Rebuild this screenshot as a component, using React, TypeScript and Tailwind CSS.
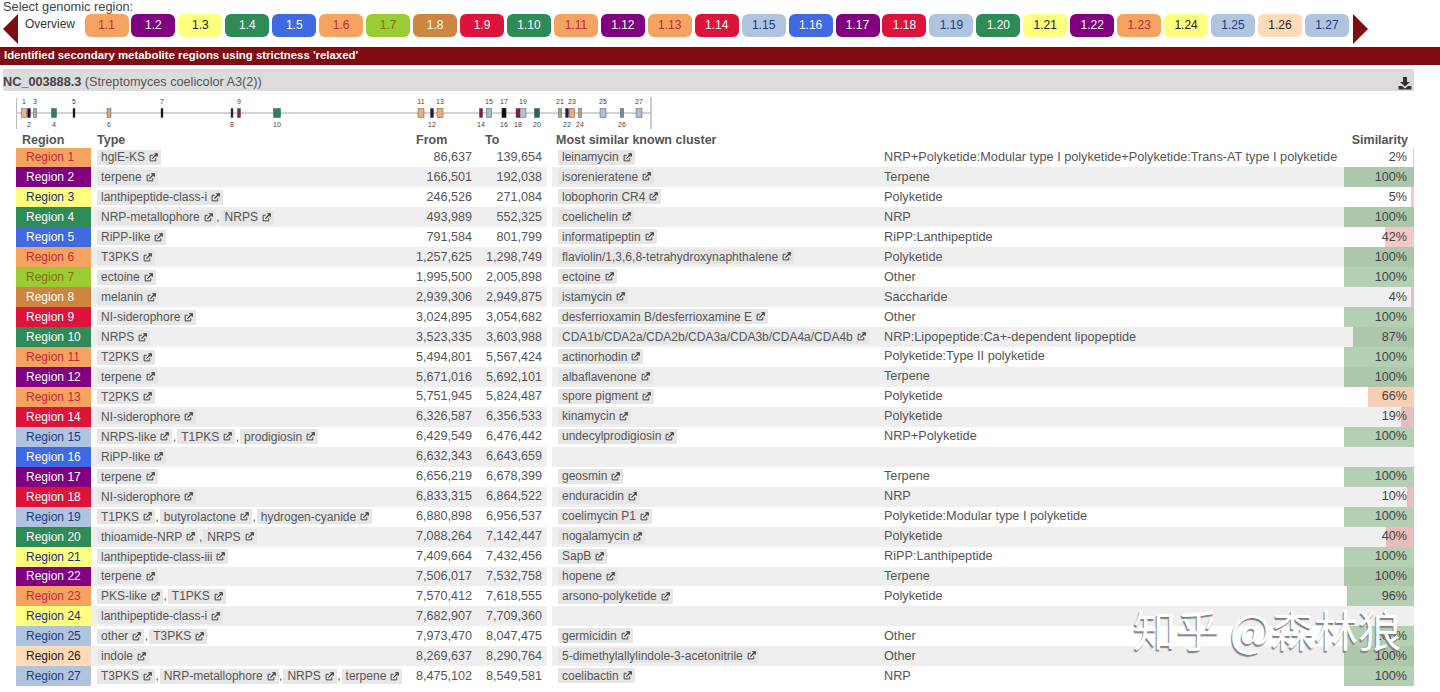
const palette: Record<string, string> = {
  orange: 'bg-[#f4a460] text-[#c8283c]',
  purple: 'bg-[#800080] text-white',
  yellow: 'bg-[#ffff7f] text-[#1c2f7a]',
  green: 'bg-[#2e8b57] text-white',
  blue: 'bg-[#4169e1] text-white',
  olive: 'bg-[#9acd32] text-[#8a6d10]',
  tan: 'bg-[#cd853f] text-white',
  crimson: 'bg-[#dc143c] text-white',
  steel: 'bg-[#b0c4de] text-[#1c3a8a]',
  peach: 'bg-[#ffdab9] text-[#2a1a10]',
};

const pillText: Record<string, string> = {
  yellow: 'text-[#222222]',
  peach: 'text-[#222222]',
};

type Row = {
  color: string;
  types: string[];
  from: string;
  to: string;
  cluster?: string;
  kind?: string;
  sim?: number;
};

const rows: Row[] = [
  { color: 'orange', types: ['hglE-KS'], from: '86,637', to: '139,654', cluster: 'leinamycin', kind: 'NRP+Polyketide:Modular type I polyketide+Polyketide:Trans-AT type I polyketide', sim: 2 },
  { color: 'purple', types: ['terpene'], from: '166,501', to: '192,038', cluster: 'isorenieratene', kind: 'Terpene', sim: 100 },
  { color: 'yellow', types: ['lanthipeptide-class-i'], from: '246,526', to: '271,084', cluster: 'lobophorin CR4', kind: 'Polyketide', sim: 5 },
  { color: 'green', types: ['NRP-metallophore', 'NRPS'], from: '493,989', to: '552,325', cluster: 'coelichelin', kind: 'NRP', sim: 100 },
  { color: 'blue', types: ['RiPP-like'], from: '791,584', to: '801,799', cluster: 'informatipeptin', kind: 'RiPP:Lanthipeptide', sim: 42 },
  { color: 'orange', types: ['T3PKS'], from: '1,257,625', to: '1,298,749', cluster: 'flaviolin/1,3,6,8-tetrahydroxynaphthalene', kind: 'Polyketide', sim: 100 },
  { color: 'olive', types: ['ectoine'], from: '1,995,500', to: '2,005,898', cluster: 'ectoine', kind: 'Other', sim: 100 },
  { color: 'tan', types: ['melanin'], from: '2,939,306', to: '2,949,875', cluster: 'istamycin', kind: 'Saccharide', sim: 4 },
  { color: 'crimson', types: ['NI-siderophore'], from: '3,024,895', to: '3,054,682', cluster: 'desferrioxamin B/desferrioxamine E', kind: 'Other', sim: 100 },
  { color: 'green', types: ['NRPS'], from: '3,523,335', to: '3,603,988', cluster: 'CDA1b/CDA2a/CDA2b/CDA3a/CDA3b/CDA4a/CDA4b', kind: 'NRP:Lipopeptide:Ca+-dependent lipopeptide', sim: 87 },
  { color: 'orange', types: ['T2PKS'], from: '5,494,801', to: '5,567,424', cluster: 'actinorhodin', kind: 'Polyketide:Type II polyketide', sim: 100 },
  { color: 'purple', types: ['terpene'], from: '5,671,016', to: '5,692,101', cluster: 'albaflavenone', kind: 'Terpene', sim: 100 },
  { color: 'orange', types: ['T2PKS'], from: '5,751,945', to: '5,824,487', cluster: 'spore pigment', kind: 'Polyketide', sim: 66 },
  { color: 'crimson', types: ['NI-siderophore'], from: '6,326,587', to: '6,356,533', cluster: 'kinamycin', kind: 'Polyketide', sim: 19 },
  { color: 'steel', types: ['NRPS-like', 'T1PKS', 'prodigiosin'], from: '6,429,549', to: '6,476,442', cluster: 'undecylprodigiosin', kind: 'NRP+Polyketide', sim: 100 },
  { color: 'blue', types: ['RiPP-like'], from: '6,632,343', to: '6,643,659' },
  { color: 'purple', types: ['terpene'], from: '6,656,219', to: '6,678,399', cluster: 'geosmin', kind: 'Terpene', sim: 100 },
  { color: 'crimson', types: ['NI-siderophore'], from: '6,833,315', to: '6,864,522', cluster: 'enduracidin', kind: 'NRP', sim: 10 },
  { color: 'steel', types: ['T1PKS', 'butyrolactone', 'hydrogen-cyanide'], from: '6,880,898', to: '6,956,537', cluster: 'coelimycin P1', kind: 'Polyketide:Modular type I polyketide', sim: 100 },
  { color: 'green', types: ['thioamide-NRP', 'NRPS'], from: '7,088,264', to: '7,142,447', cluster: 'nogalamycin', kind: 'Polyketide', sim: 40 },
  { color: 'yellow', types: ['lanthipeptide-class-iii'], from: '7,409,664', to: '7,432,456', cluster: 'SapB', kind: 'RiPP:Lanthipeptide', sim: 100 },
  { color: 'purple', types: ['terpene'], from: '7,506,017', to: '7,532,758', cluster: 'hopene', kind: 'Terpene', sim: 100 },
  { color: 'orange', types: ['PKS-like', 'T1PKS'], from: '7,570,412', to: '7,618,555', cluster: 'arsono-polyketide', kind: 'Polyketide', sim: 96 },
  { color: 'yellow', types: ['lanthipeptide-class-i'], from: '7,682,907', to: '7,709,360' },
  { color: 'steel', types: ['other', 'T3PKS'], from: '7,973,470', to: '8,047,475', cluster: 'germicidin', kind: 'Other', sim: 100 },
  { color: 'peach', types: ['indole'], from: '8,269,637', to: '8,290,764', cluster: '5-dimethylallylindole-3-acetonitrile', kind: 'Other', sim: 100 },
  { color: 'steel', types: ['T3PKS', 'NRP-metallophore', 'NRPS', 'terpene'], from: '8,475,102', to: '8,549,581', cluster: 'coelibactin', kind: 'NRP', sim: 100 },
];

// label, centre x, width, fill of each region on the overview line
const marks: [string, number, number, string][] = [
  ['1', 8, 5, '#eeb488'], ['2', 13, 3, '#2a0a3a'], ['3', 19, 3, '#a8b088'], ['4', 38, 5, '#2e7f5f'],
  ['5', 58, 2, '#111111'], ['6', 93, 4, '#dda67c'], ['7', 146, 2, '#111111'], ['8', 216, 2, '#222233'],
  ['9', 223, 3, '#8a2440'], ['10', 261, 7, '#2e7f5f'], ['11', 405, 6, '#eeaa70'], ['12', 416, 3, '#1a1a44'],
  ['13', 424, 6, '#eeaa70'], ['14', 465, 3, '#8a1a44'], ['15', 473, 5, '#a8bccc'], ['16', 488, 4, '#111111'],
  ['17', 488, 4, '#111111'], ['18', 502, 4, '#8a1a44'], ['19', 507, 6, '#b0c4d8'], ['20', 521, 5, '#1f6f4f'],
  ['21', 544, 3, '#a0a880'], ['22', 551, 3, '#2a1a4a'], ['23', 556, 5, '#eeaa70'], ['24', 564, 3, '#a8b080'],
  ['25', 587, 6, '#b0c0d4'], ['26', 606, 3, '#808890'], ['27', 623, 6, '#b0bcd4'],
];

const simColor = (sim: number) => {
  if (sim >= 80) return 'bg-[#6b9f6b]/50';
  if (sim >= 60) return 'bg-[#e8884a]/40';
  return 'bg-[#e06060]/35';
};

const ExternalIcon = () => (
  <svg viewBox="0 0 12 12" className="ml-[4px] inline-block h-[9px] w-[9px] shrink-0 text-[#333333]" fill="none" stroke="currentColor">
    <path d="M9 7v3.5H1.5V3H5" strokeWidth="1.2" />
    <path d="M4.5 7.5L10 2M7 1h4v4" strokeWidth="1.5" />
  </svg>
);

const Tag = ({ label }: { label: string }) => (
  <span className="inline-flex h-[15px] items-center bg-[#e6e6e6] pr-[3px] pl-[4px] text-[12px] whitespace-nowrap">
    {label}
    <ExternalIcon />
  </span>
);

const Overview = () => (
  <svg viewBox="0 0 640 33" className="ml-[16px] mt-[6px] block h-[33px] w-[640px]">
    <line x1="0.5" y1="1" x2="0.5" y2="32" stroke="#bbbbbb" />
    <line x1="635" y1="0" x2="635" y2="32" stroke="#bbbbbb" strokeWidth="1.5" />
    <line x1="0" y1="16" x2="636" y2="16" stroke="#c4c4c4" strokeWidth="1.3" />
    {marks.map(([t, x, w, fill], i) => (
      <g key={t}>
        <rect x={x - w / 2} y={11.5} width={w} height={9} fill={fill} stroke="#333333" strokeOpacity="0.55" strokeWidth="0.7" />
        <text
          x={x}
          y={i % 2 === 0 ? 6.5 : 30}
          fontSize="7"
          textAnchor="middle"
          fill="#444444"
          fontFamily="Liberation Sans"
        >
          {t}
        </text>
      </g>
    ))}
  </svg>
);

export default function App() {
  return (
    <div className="relative h-[692px] w-[1440px] overflow-hidden bg-white font-['Liberation_Sans',Arial,sans-serif] text-[12.6px] text-[#555555]">
      <div className="pl-[3px] text-[12.8px] leading-[13px] text-[#444444]">Select genomic region:</div>

      <div className="mt-px flex h-[30px] items-start pl-[3px]">
        <svg viewBox="0 0 15 30" className="h-[30px] w-[15px] shrink-0">
          <path d="M15 0V30L0 15Z" fill="#7f0c10" />
        </svg>
        <div className="w-[66.5px] shrink-0 pl-[7px] pt-[3px] text-[12px] leading-[15px] text-[#333333]">Overview</div>
        <div className="flex gap-[2.95px]">
          {rows.map((r, i) => (
            <div
              key={i}
              className={`flex h-[22.5px] w-[44px] items-center justify-center rounded-[6px] text-[12px] ${palette[r.color]} ${pillText[r.color] ?? ''}`}
            >
              1.{i + 1}
            </div>
          ))}
        </div>
        <svg viewBox="0 0 15 30" className="ml-[4px] h-[30px] w-[15px] shrink-0">
          <path d="M0 0V30L15 15Z" fill="#7f0c10" />
        </svg>
      </div>

      <div className="mt-[3px] flex h-[18px] items-center bg-[#7f0c10] pl-[4px] text-[11.4px] font-bold text-white">
        Identified secondary metabolite regions using strictness 'relaxed'
      </div>

      <div className="ml-[3px] mt-[4px] flex h-[22px] w-[1411px] items-end justify-between bg-[#dcdcdc] pr-[2px] pb-px text-[12.7px] leading-[15px]">
        <div>
          <span className="font-bold text-[#444444]">NC_003888.3</span> (Streptomyces coelicolor A3(2))
        </div>
        <svg viewBox="0 0 14 14" className="h-[14px] w-[14px]" fill="#333333">
          <path d="M5 1h4v5h3L7 10.5 2 6h3zM0.5 10H4l3 2.5L10 10h3.5v3.5H.5z" />
        </svg>
      </div>

      <Overview />

      <div className="ml-[16px] mt-[2.5px] flex h-[15px] w-[1398px] items-center text-[12.5px] font-bold text-[#555555]">
        <div className="w-[81px] pl-[6px]">Region</div>
        <div className="w-[319px]">Type</div>
        <div className="w-[69px]">From</div>
        <div className="w-[71px]">To</div>
        <div className="flex-1">Most similar known cluster</div>
        <div className="w-[70px] pr-[6px] text-right">Similarity</div>
      </div>

      <div className="ml-[16px] w-[1398px]">
        {rows.map((r, i) => (
          <div key={i} className={`flex h-[19.96px] items-center ${i % 2 === 1 ? 'bg-[#efefef]' : 'bg-white'}`}>
            <div className={`flex h-full w-[75px] shrink-0 items-center pl-[10px] text-[12px] ${palette[r.color]}`}>Region {i + 1}</div>
            <div className="flex w-[324px] shrink-0 items-center pl-[6px] whitespace-nowrap">
              {r.types.map((t, j) => (
                <span key={t} className="flex items-center">
                  {j > 0 && <span className="mr-px ml-[0.5px] text-[12px]">,</span>}
                  <Tag label={t} />
                </span>
              ))}
            </div>
            <div className="w-[57px] shrink-0 text-right">{r.from}</div>
            <div className="w-[70px] shrink-0 text-right">{r.to}</div>
            <div className="flex h-full w-[15px] shrink-0">
              <div className="ml-[5px] h-full w-[5px] bg-white" />
            </div>
            <div className="w-[327px] shrink-0 pl-px whitespace-nowrap">
              {r.cluster && <Tag label={r.cluster} />}
            </div>
            <div className="flex-1 text-[12.7px] whitespace-nowrap">{r.kind}</div>
            <div className="relative flex h-full w-[70px] shrink-0 items-center justify-end pr-[7px]">
              {r.sim !== undefined && (
                <div className={`absolute inset-y-0 right-0 ${simColor(r.sim)}`} style={{ width: `${r.sim}%` }} />
              )}
              {r.sim !== undefined && <span className="relative text-[#444444]">{r.sim}%</span>}
            </div>
          </div>
        ))}
      </div>

      <div className="absolute left-[1133px] top-[601px] font-['Noto_Sans_CJK_SC',sans-serif] text-[43.5px] leading-[56px] whitespace-nowrap text-white [text-shadow:-1px_2px_1px_#808080]">
        知乎 @森林狼
      </div>
    </div>
  );
}
